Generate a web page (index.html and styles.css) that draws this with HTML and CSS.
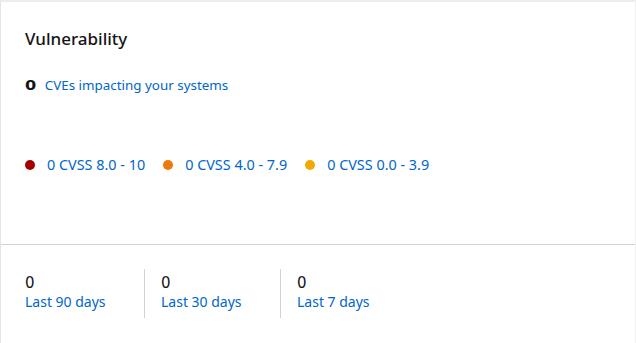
FILE: index.html
```html
<!DOCTYPE html>
<html>
<head>
<meta charset="utf-8">
<link rel="stylesheet" href="styles.css">
</head>
<body>
<div class="card">
	<div class="card_body">
		<div class="card_title">Vulnerability</div>
		<div class="cve_total">
			<span class="cve_count">0</span>
			<a class="link cve_link" href="#">CVEs impacting your systems</a>
		</div>
		<div class="severity_list">
			<a class="link severity" href="#"><span class="dot dot_critical"></span>0 CVSS 8.0 - 10</a>
			<a class="link severity" href="#"><span class="dot dot_important"></span>0 CVSS 4.0 - 7.9</a>
			<a class="link severity" href="#"><span class="dot dot_moderate"></span>0 CVSS 0.0 - 3.9</a>
		</div>
	</div>
	<div class="card_footer">
		<div class="stat">
			<div class="stat_value">0</div>
			<a class="link" href="#">Last 90 days</a>
		</div>
		<div class="stat">
			<div class="stat_value">0</div>
			<a class="link" href="#">Last 30 days</a>
		</div>
		<div class="stat">
			<div class="stat_value">0</div>
			<a class="link" href="#">Last 7 days</a>
		</div>
	</div>
</div>
</body>
</html>
```

FILE: styles.css
```css
body {
	margin: 0;
	background: #ffffff;
	font-family: "Noto Sans", "Open Sans", sans-serif;
	color: #151515;
}
.card {
	height: 343px;
	border-top: 2px solid #ededed;
	border-left: 1px solid #e4e4e4;
	border-right: 1px solid #f0f0f0;
	box-sizing: border-box;
	display: flex;
	flex-direction: column;
}
.card_body {
	padding: 25px 24px 0 24px;
	height: 243px;
	flex-shrink: 0;
	box-sizing: border-box;
	border-bottom: 1px solid #d2d2d2;
}
.card_title {
	font-size: 17px;
	font-weight: 500;
	line-height: 24px;
}
.cve_total {
	margin-top: 25px;
	display: flex;
	align-items: baseline;
	gap: 8px;
}
.cve_count {
	display: inline-block;
	font-family: "DejaVu Sans", sans-serif;
	font-size: 14px;
	font-weight: 600;
	transform: scaleX(1.15);
	transform-origin: left;
	padding-right: 2px;
}
.link {
	color: #0066cc;
	text-decoration: none;
	font-size: 14px;
}
.cve_link {
	font-size: 13.4px;
}
.severity_list {
	margin-top: 61px;
	display: flex;
	gap: 18px;
}
.severity {
	display: flex;
	align-items: center;
	gap: 12px;
	font-size: 14.4px;
}
.dot {
	width: 10px;
	height: 10px;
	border-radius: 50%;
	display: inline-block;
}
.dot_critical { background: #a30000; }
.dot_important { background: #ec7a08; }
.dot_moderate { background: #f0ab00; }
.card_footer {
	display: flex;
	padding: 24px 0 0 24px;
}
.stat {
	display: flex;
	flex-direction: column;
	padding: 7px 16px 6px 16px;
	border-left: 1px solid #d2d2d2;
	min-width: 103px;
}
.stat:first-child {
	border-left: none;
	padding-left: 0;
	min-width: 103px;
}
.stat_value {
	font-family: "DejaVu Sans", sans-serif;
	font-size: 15px;
	line-height: 15px;
}
.stat .link {
	margin-top: 1px;
	line-height: 20px;
}
```
